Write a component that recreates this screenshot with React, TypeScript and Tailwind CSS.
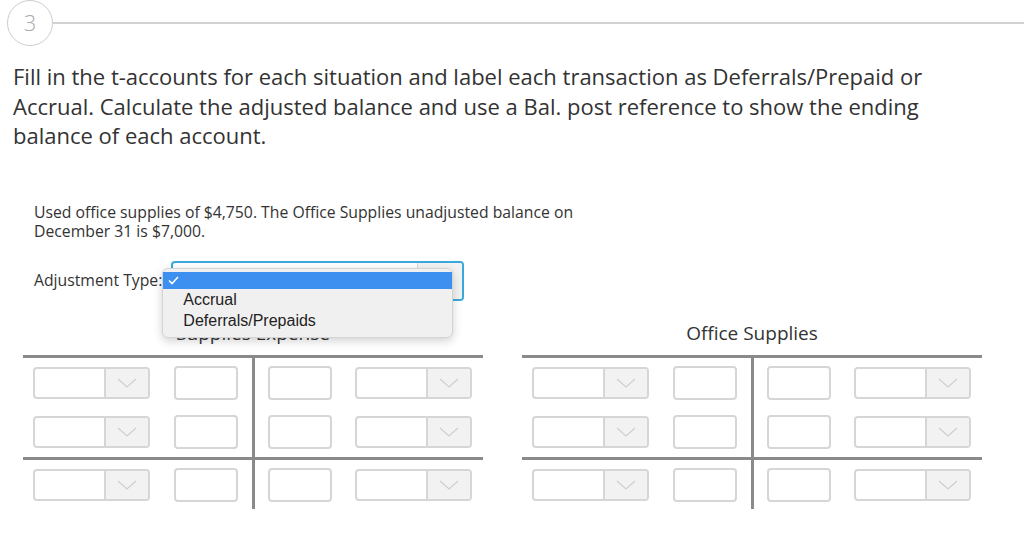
import React from 'react'

function Chevron() {
  return (
    <svg width="20" height="10" viewBox="0 0 20 10" fill="none">
      <polyline points="1,1 10,9 19,1" stroke="#cfcfcf" strokeWidth="1.2" />
    </svg>
  )
}

function SelectBox() {
  return (
    <div className="flex h-[32px] w-[117px] shrink-0 overflow-hidden rounded-[4px] border-2 border-[#d6d6d6] bg-white">
      <div className="flex-1" />
      <div className="flex w-[44px] items-center justify-center border-l-2 border-[#d6d6d6] bg-[#f2f2f2]">
        <Chevron />
      </div>
    </div>
  )
}

function InputBox() {
  return <div className="h-[34px] w-[64px] shrink-0 rounded-[4px] border-2 border-[#d6d6d6] bg-white" />
}

function LeftRow() {
  return (
    <div className="flex h-[34px] items-center gap-[24px] pl-[10px]">
      <SelectBox />
      <InputBox />
    </div>
  )
}

function RightRow() {
  return (
    <div className="flex h-[34px] items-center gap-[23px] pl-[13px]">
      <InputBox />
      <SelectBox />
    </div>
  )
}

function TAccount({ title }: { title: string }) {
  return (
    <div className="w-[460px]">
      <div className="h-[24px] text-center text-[19px] leading-[24px] text-[#333]">{title}</div>
      <div className="mt-[10px] border-t-[3px] border-[#8a8a8a]">
        <div className="flex">
          <div className="flex w-[232px] flex-col gap-[15px] border-r-[3px] border-[#8a8a8a] pb-[8px] pt-[8px]">
            <LeftRow />
            <LeftRow />
          </div>
          <div className="flex flex-1 flex-col gap-[15px] pb-[8px] pt-[8px]">
            <RightRow />
            <RightRow />
          </div>
        </div>
        <div className="h-[3px] bg-[#8a8a8a]" />
        <div className="flex">
          <div className="w-[232px] border-r-[3px] border-[#8a8a8a] pb-[7px] pt-[8px]">
            <LeftRow />
          </div>
          <div className="flex-1 pb-[7px] pt-[8px]">
            <RightRow />
          </div>
        </div>
      </div>
    </div>
  )
}

function Menu() {
  return (
    <div className="absolute left-[-9px] top-[7px] z-10 w-[291px] rounded-[6px] border border-[#d4d4d4] bg-[#f0f0f0] pb-[6px] pt-[3px] shadow-[0_3px_10px_rgba(0,0,0,0.18)] font-['Liberation_Sans',Arial,sans-serif] text-[16px] text-[#222]">
      <div className="flex h-[17px] items-center bg-[#3d8ff0] pl-[5px]">
        <svg width="11" height="9" viewBox="0 0 11 9" fill="none">
          <polyline points="1,4.5 4,7.5 10,1" stroke="#fff" strokeWidth="1.6" />
        </svg>
      </div>
      <div className="h-[21px] pl-[20px] leading-[21px]">Accrual</div>
      <div className="h-[21px] pl-[20px] leading-[21px]">Deferrals/Prepaids</div>
    </div>
  )
}

export default function App() {
  return (
    <div className="h-[548px] w-[1024px] overflow-hidden bg-white font-['Open_Sans',sans-serif] text-[#333]">
      <div className="flex h-[45px] items-center pl-[7px]">
        <div className="flex h-[46px] w-[46px] shrink-0 items-center justify-center rounded-full border-[1.5px] border-[#cccccc] text-[22px] font-light text-[#aaa]">
          3
        </div>
        <div className="h-[2px] flex-1 bg-[#d2d2d2]" />
      </div>

      <p className="ml-[13px] mt-[17px] w-[940px] text-[22px] leading-[29.5px] text-[#333]">
        Fill in the t-accounts for each situation and label each transaction as Deferrals/Prepaid or Accrual. Calculate the
        adjusted balance and use a Bal. post reference to show the ending balance of each account.
      </p>

      <p className="ml-[34px] mt-[52px] w-[600px] text-[15.75px] leading-[19px] text-[#333]">
        Used office supplies of $4,750. The Office Supplies unadjusted balance on December 31 is $7,000.
      </p>

      <div className="ml-[34px] mt-[20px] flex items-center gap-[9px]">
        <span className="text-[15.75px] text-[#333]">Adjustment Type:</span>
        <div className="relative">
          <div className="flex h-[40px] w-[293px] overflow-hidden rounded-[4px] border-2 border-[#3aa9d9] bg-white">
            <div className="flex-1" />
            <div className="w-[45px] border-l border-[#d6d6d6] bg-[#f2f2f2]" />
          </div>
          <Menu />
        </div>
      </div>

      <div className="ml-[23px] mt-[20px] flex gap-[39px]">
        <TAccount title="Supplies Expense" />
        <TAccount title="Office Supplies" />
      </div>
    </div>
  )
}
